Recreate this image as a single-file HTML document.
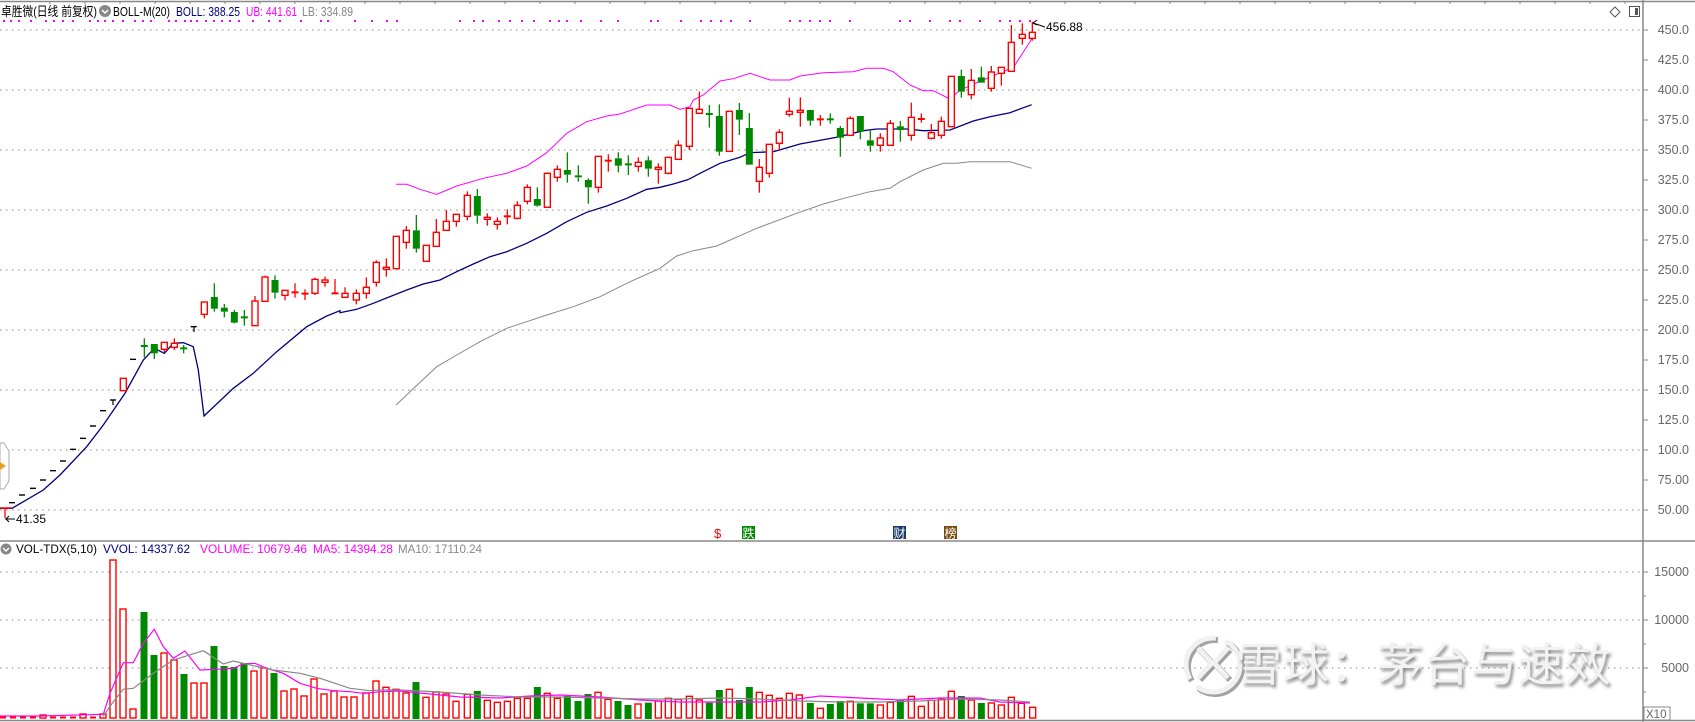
<!DOCTYPE html>
<html><head><meta charset="utf-8">
<style>
html,body{margin:0;padding:0;background:#fff;overflow:hidden}
body{width:1695px;height:722px;position:relative;font-family:"Liberation Sans","Noto Sans CJK SC",sans-serif}
svg{position:absolute;left:0;top:0}
.wm{position:absolute;left:1236px;top:632px;font-size:46px;color:#f2f2f2;letter-spacing:1px;text-shadow:2px 3px 3px #8a8a8a;font-family:"Noto Sans CJK SC","WenQuanYi Zen Hei",sans-serif;white-space:nowrap;line-height:60px}
</style></head><body>
<svg id="s" width="1695" height="722" xmlns="http://www.w3.org/2000/svg" font-family="Liberation Sans, Noto Sans CJK SC, sans-serif"></svg>
<div class="wm">雪球：茅台与速效</div>
<script>
var s=document.getElementById('s'),h='';
function L(x1,y1,x2,y2,c,w,extra){h+='<line x1="'+x1+'" y1="'+y1+'" x2="'+x2+'" y2="'+y2+'" stroke="'+c+'" stroke-width="'+(w||1)+'" '+(extra||'')+'/>';}
function R(x,y,w,hh,f,st,sw){h+='<rect x="'+x+'" y="'+y+'" width="'+w+'" height="'+hh+'" fill="'+f+'" '+(st?'stroke="'+st+'" stroke-width="'+(sw||1)+'"':'')+'/>';}
function T(x,y,t,c,sz,anchor,len){h+='<text x="'+x+'" y="'+y+'" fill="'+c+'" font-size="'+(sz||12)+'" '+(anchor?'text-anchor="'+anchor+'" ':'')+(len?'textLength="'+len+'" lengthAdjust="spacingAndGlyphs"':'')+'>'+t+'</text>';}
function P(pts,c,w){h+='<polyline fill="none" stroke="'+c+'" stroke-width="'+(w||1)+'" points="'+pts.map(function(p){return p[0].toFixed(1)+','+p[1].toFixed(1)}).join(' ')+'"/>';}
var AX=1643;
L(0,1.5,1695,1.5,'#888',1.5);
for(var x=50;x<AX;x+=35)L(x,1,x,4,'#888');
L(AX,0,AX,722,'#888',1.5);
L(0,541,1695,541,'#888',1.5);
L(0,720.5,1695,720.5,'#888',1.5);
for(var p=450;p>=50;p-=25){var y=30+(450-p)*1.2;
 if(p%50==0)L(0,y,AX,y,'#888',1,'stroke-dasharray="1.5,4.5"');
 L(AX,y,AX+5,y,'#888');
 T(1689,y+4,p>=100?p.toFixed(1):p.toFixed(2),'#666',12.5,'end');}
[[15000,572],[10000,620],[5000,668]].forEach(function(a){L(0,a[1],AX,a[1],'#888',1,'stroke-dasharray="1.5,4.5"');L(AX,a[1],AX+5,a[1],'#888');T(1689,a[1]+4,a[0],'#666',12.5,'end');});
L(AX,596,AX+3,596,'#888');L(AX,644,AX+3,644,'#888');L(AX,692,AX+3,692,'#888');
R(1644,707,26,13,'#fff','#888');T(1646,718,'X10','#666',11.5);
[3,10,18,30,45,53,62,72,89,97,104,112,122,134,142,150,168,175,184,190,196,205,213,221,229,238,252,268,279,300,320,327,354,371,386,396,459,473,482,498,509,521,533,549,558,566,580,600,617,650,657,680,700,710,720,730,749,789,799,809,819,829,849,899,909,929,949,959,979,999,1009,1019,1029].forEach(function(x){R(x,20,2,2,'#f0f');});
T(1,16,'卓胜微(日线 前复权)','#000',13,null,96);
h+='<circle cx="105" cy="11" r="6" fill="#888"/><path d="M102 10 l3 3 l3 -3" stroke="#fff" stroke-width="1.5" fill="none"/>';
T(113,16,'BOLL-M(20)','#000',13,null,57);T(176,16,'BOLL: 388.25','#00007f',13,null,64);T(246,16,'UB: 441.61','#f0f',13,null,51);T(302,16,'LB: 334.89','#888',13,null,51);
h+='<path d="M1615 7 l5 5 l-5 5 l-5 -5z" fill="none" stroke="#555"/>';R(1629.5,6.5,10,10,'#fff','#555');R(1635,8,3,7,'#555');
h+='<circle cx="6" cy="549" r="5.5" fill="#888"/><path d="M3 548 l3 3 l3 -3" stroke="#fff" stroke-width="1.5" fill="none"/>';
T(16,553,'VOL-TDX(5,10)','#000',12,null,81);T(103,553,'VVOL: 14337.62','#00007f',12,null,87);T(200,553,'VOLUME: 10679.46','#f0f',12,null,107);T(313,553,'MA5: 14394.28','#f0f',12,null,80);T(398,553,'MA10: 17110.24','#888',12,null,84);
function cv(a,ox,oy){return a.map(function(p){return [ox+p[0]/3,oy+p[1]/3]});}
var mid=cv([[0,985],[36,985],[130,930],[180,885],[260,800],[310,735],[375,640],[430,540],[463,505],[493,520],[520,490],[550,488],[580,500],[595,570],[612,708],[700,625],[760,580],[830,515],[920,440],[980,408],[1020,392]],0,180)
 .concat(cv([[0,698],[50,688],[100,670],[200,630],[250,612],[300,600],[350,575],[400,552],[450,530],[500,515],[560,490],[620,460],[680,425],[740,397],[800,378],[860,355],[920,328],[960,322],[1000,312],[1040,300],[1050,296]],340,80))
 .concat(cv([[30,520],[90,490],[150,472],[180,458],[250,455],[330,432],[440,412],[520,392],[560,387],[650,387],[700,392],[780,390],[850,363],[900,350],[960,338],[1025,314]],690,0));
P(mid,'#00007f',1.3);
var ub=cv([[168,313],[200,313],[240,328],[290,343],[350,318],[430,295],[500,280],[560,258],[620,218],[680,160],[740,125],[800,108],[840,102],[920,75],[990,75],[1020,88],[1050,80]],340,80)
 .concat(cv([[10,300],[40,285],[90,243],[130,236],[180,220],[240,240],[300,240],[330,228],[400,218],[490,215],[530,205],[580,205],[610,215],[660,255],[700,272],[730,272],[780,297],[810,270],[880,240],[950,210],[975,195],[1025,117]],690,0));
P(ub,'#f0f',1);
var lb=cv([[168,975],[210,935],[290,860],[350,825],[420,785],[500,745],[560,725],[620,705],[700,680],[780,650],[860,610],[960,565],[1010,528],[1050,515]],340,80)
 .concat(cv([[10,752],[80,738],[200,685],[320,640],[400,612],[480,590],[540,575],[600,565],[630,545],[700,510],[760,490],[800,490],[840,485],[960,485],[1025,505]],690,0));
P(lb,'#888',1);
function C(x,bt,bb,wt,wb,c){var col=c=='r'?'#f00':'#080';
 if(wt<bt)L(x,wt,x,bt,col,1.3);if(wb>bb)L(x,bb,x,wb,col,1.3);
 if(bb-bt<1.5){L(x-3.5,bt,x+3.5,bt,col,2);}
 else if(c=='r')R(x-3,bt,6,bb-bt,'#fff',col,1.4);else R(x-3.5,bt,7,bb-bt,col);}
function Z(list,ox,oy){list.forEach(function(a){C(ox+a[0]/3,oy+a[1]/3,oy+a[2]/3,oy+a[3]/3,oy+a[4]/3,a[5]);});}
[[36,968],[66,945],[99,925],[129,900],[159,872],[189,843],[219,808],[249,775],[279,738],[309,692],[339,660],[399,538],[581,440]].forEach(function(a){var x=a[0]/3,y=180+a[1]/3;L(x-3,y,x+3,y,'#000',1.4);});
L(113,400,113,405,'#000',1.2);L(194,327,194,332,'#000',1.2);
L(0,508,12,508,'#f00',1.5);L(5,508,5,518,'#f00',1.3);
L(5,519,15,519,'#000');h+='<path d="M9 516 l-3 3 l3 3" fill="none" stroke="#000"/>';T(16,523,'41.35','#000',12);
Z([[370,595,632,595,632,'r'],[433,498,498,475,532,'g'],[463,492,520,492,537,'g'],[493,487,508,487,518,'r'],[523,490,502,475,510,'r'],[551,505,505,495,520,'g'],[613,366,403,366,415,'r'],[643,351,386,310,395,'g'],[673,383,395,372,412,'g'],[703,396,428,390,430,'g'],[733,412,412,390,437,'g'],[765,363,437,348,437,'r'],[795,291,364,287,364,'r'],[825,300,338,286,356,'g'],[855,331,346,331,361,'r'],[885,337,337,310,353,'r'],[915,341,341,328,360,'r'],[945,298,340,293,345,'r'],[975,300,307,290,320,'r'],[1005,340,340,297,340,'r'],[1035,340,352,322,352,'r']],0,180);
Z([[49,640,660,628,673,'r'],[79,622,640,592,656,'r'],[109,547,607,541,620,'r'],[139,562,568,535,590,'r'],[169,469,566,469,566,'r'],[199,451,487,438,506,'r'],[229,451,506,405,518,'g'],[259,496,544,496,544,'r'],[289,457,499,417,499,'r'],[319,424,451,390,451,'r'],[349,403,424,403,440,'r'],[382,346,409,334,421,'r'],[412,348,407,327,431,'g'],[442,412,418,400,437,'r'],[472,424,433,412,449,'r'],[502,409,409,388,433,'r'],[532,376,415,364,418,'r'],[562,322,364,313,373,'r'],[592,357,377,322,380,'g'],[622,280,382,277,382,'r'],[652,268,292,256,305,'r'],[682,270,284,217,308,'g'],[715,286,292,256,305,'g'],[745,300,322,295,371,'g'],[775,229,322,229,338,'r'],[805,242,242,223,275,'r'],[835,235,257,217,277,'g'],[865,253,253,226,285,'g'],[895,247,259,232,275,'r'],[925,241,266,229,290,'g'],[955,262,268,250,311,'r'],[985,232,280,232,283,'r'],[1015,196,238,181,238,'r'],[1048,85,199,85,210,'r']],340,80);
Z([[28,328,340,275,340,'r'],[58,342,342,315,383,'g'],[88,348,455,313,467,'g'],[118,334,454,334,454,'r'],[148,330,359,309,405,'g'],[178,384,494,339,494,'g'],[208,502,544,477,578,'r'],[238,433,520,433,533,'r'],[268,397,430,388,450,'r'],[298,334,343,293,350,'r'],[331,331,337,292,380,'r'],[361,330,362,330,377,'g'],[391,358,358,345,377,'r'],[421,358,358,340,371,'g'],[451,384,413,378,470,'g'],[481,355,406,349,406,'r'],[511,348,395,348,418,'g'],[541,421,437,392,455,'g'],[571,414,436,400,455,'r'],[601,370,436,360,436,'r'],[631,379,390,363,425,'g'],[664,352,406,308,422,'r'],[694,357,357,340,368,'r'],[724,398,415,372,418,'r'],[754,364,406,350,416,'r'],[784,229,380,229,380,'r'],[814,228,275,209,293,'g'],[844,241,284,207,298,'r'],[874,232,248,200,248,'g'],[904,216,265,198,275,'r'],[934,202,220,202,257,'r'],[964,127,214,75,214,'r'],[997,103,115,70,134,'r'],[1027,97,115,65,122,'r']],690,0);
h+='<path d="M1033 23 l4 -3 M1033 23 l4 2" stroke="#000" fill="none"/>';L(1033,23,1045,27,'#000');T(1046,31,'456.88','#000',12);
h+='<path d="M0 443 l4 0 l5 8 l0 30 l-5 8 l-4 0z" fill="#fff" stroke="#aaa"/><path d="M0 462 l6 4 l-6 4z" fill="#e8a020"/>';
T(714,538,'$','#f00',13);
[[742,'跌','#080'],[893,'财','#1a3a6e'],[944,'榜','#7a4a10']].forEach(function(a){R(a[0],526,13,13,a[2]);T(a[0]+0.5,537.5,a[1],'#fff',12);});
var BASE=718;
function V(x,top,c){var col=c=='r'?'#f00':'#080';if(c=='r')R(x-3,top,6,BASE-top,'#fff',col,1.4);else R(x-3.5,top,7,BASE-top+1,col);}
L(0,717.5,100,717.5,'#f00',2,'stroke-dasharray="6,4"');
[[43,715],[83,714],[103,714]].forEach(function(a){V(a[0],a[1],'r');});
var v1=[[113,560,'r'],[123,609,'r'],[133,709,'r'],[144,612,'g'],[154,655,'g'],[164,653,'r'],[174,660,'r'],[184,674,'g'],[194,683,'r'],[204,683,'r'],[214,646,'g'],[224,666,'g'],[234,667,'g'],[244,663,'g'],[254,671,'r'],[264,668,'r'],[274,673,'g'],[284,691,'r'],[294,689,'r'],[304,696,'r'],[314,679,'r'],[324,694,'r'],[334,691,'r'],[344,697,'r'],[354,697,'r'],[366,693,'r'],[376,681,'r']];
v1.forEach(function(a){V(a[0],a[1],a[2]);});
var z11=[[18,142,'r'],[48,148,'r'],[78,159,'r'],[108,126,'g'],[138,172,'r'],[168,156,'r'],[198,162,'r'],[228,184,'r'],[262,163,'r'],[292,153,'g'],[322,181,'r'],[352,187,'r'],[382,184,'r'],[412,175,'r'],[442,175,'r'],[472,141,'g'],[502,160,'r'],[532,175,'r'],[562,168,'g'],[594,183,'g'],[624,162,'g'],[654,157,'r'],[684,178,'r'],[714,183,'g'],[744,195,'g'],[774,192,'r']];
z11.forEach(function(a){V(380+a[0]/3,640+a[1]/3,a[2]);});
var z10=[[25,608,'g'],[55,603,'r'],[85,595,'r'],[115,598,'r'],[148,589,'r'],[178,600,'r'],[208,608,'g'],[238,570,'g'],[268,568,'r'],[298,600,'g'],[328,561,'g'],[358,577,'r'],[388,586,'r'],[418,595,'r'],[448,580,'r'],[478,585,'r'],[511,609,'g'],[541,625,'r'],[571,612,'g'],[601,603,'g'],[631,604,'r'],[661,610,'g'],[691,610,'g'],[721,615,'r'],[751,607,'r'],[781,600,'g'],[814,589,'r'],[844,619,'r'],[874,601,'r'],[904,598,'r'],[934,574,'r'],[964,588,'g'],[994,600,'r'],[1024,609,'g'],[1054,609,'r'],[1084,615,'r'],[1114,592,'r'],[1144,610,'r'],[1178,622,'r']];
z10.forEach(function(a){V(640+a[0]/3,500+a[1]/3,a[2]);});
var ma5=cv([[0,588],[120,588],[310,583],[330,520],[370,428],[400,428],[430,370],[463,328],[490,380],[520,415],[555,393],[600,450],[650,448],[700,445],[730,432],[765,430],[800,445],[850,460],[900,490],[950,505],[1000,512],[1050,515],[1090,520],[1140,515]],0,520)
 .concat([[400,691],[430,694],[460,697],[500,698],[530,696],[560,695],[600,697],[640,700],[680,702],[720,702],[760,702],[790,700],[820,696],[860,698],[900,700],[940,698],[980,698],[1000,702],[1030,703]]);
P(ma5,'#f0f',1.2);
var ma10=cv([[310,588],[340,545],[370,508],[400,505],[460,460],[520,420],[610,392],[670,432],[700,423],[760,437],[820,450],[900,460],[960,475],[1050,505],[1110,512],[1140,510]],0,520)
 .concat([[400,690],[440,692],[480,695],[520,697],[560,697],[600,698],[640,699],[680,699],[720,698],[760,699],[800,701],[840,702],[880,702],[920,701],[960,699],[1000,700],[1030,702]]);
P(ma10,'#888',1.2);
h+='<g opacity="0.9"><circle cx="1215" cy="667" r="27" fill="none" stroke="#9a9a9a" stroke-width="6" stroke-dasharray="60,10"/><circle cx="1213" cy="665" r="27" fill="none" stroke="#f0f0f0" stroke-width="5" stroke-dasharray="60,10"/>'+
 '<path d="M1200 650 l14 15 l-14 15 M1230 650 l-14 15 l14 15" fill="none" stroke="#9a9a9a" stroke-width="6"/><path d="M1198 648 l14 15 l-14 15 M1228 648 l-14 15 l14 15" fill="none" stroke="#f0f0f0" stroke-width="5"/></g>';
s.innerHTML=h;
</script>
</body></html>
